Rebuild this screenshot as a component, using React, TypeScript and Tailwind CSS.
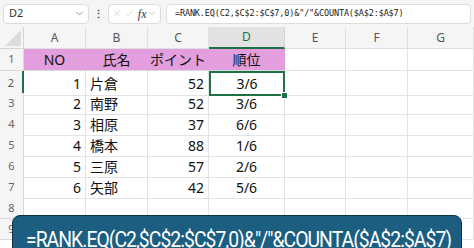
import { ChevronDown, X, Check } from 'lucide-react';

// ============================================
// Data
// ============================================

const columns = ['A', 'B', 'C', 'D', 'E', 'F', 'G'];

const rows = [
  { no: 1, name: '片倉', point: 52, rank: '3/6' },
  { no: 2, name: '南野', point: 52, rank: '3/6' },
  { no: 3, name: '相原', point: 37, rank: '6/6' },
  { no: 4, name: '橋本', point: 88, rank: '1/6' },
  { no: 5, name: '三原', point: 57, rank: '2/6' },
  { no: 6, name: '矢部', point: 42, rank: '5/6' },
];

const formula = '=RANK.EQ(C2,$C$2:$C$7,0)&"/"&COUNTA($A$2:$A$7)';

const gridCols = 'grid grid-cols-[24px_62px_62px_61px_76px_61px_62px_66px]';
const cellFont = "font-['Noto_Sans','Noto_Sans_CJK_JP',sans-serif]";

// ============================================
// Toolbar
// ============================================

function FormulaBar() {
  return (
    <div className="flex h-[27px] items-center bg-[#f5f5f5] px-[3px]">
      <div className="flex h-[20px] w-[86px] items-center justify-between rounded-[4px] border border-[#dcdcdc] bg-white pl-[5px] pr-[3px]">
        <span className="font-['Noto_Sans',sans-serif] text-[11px] text-[#333]">D2</span>
        <ChevronDown className="h-[11px] w-[11px] text-[#666]" strokeWidth={1.5} />
      </div>
      <span className="mx-[4px] text-[11px] font-bold leading-none text-[#555]">⋮</span>
      <div className="flex h-[20px] w-[53px] items-center gap-[2px] rounded-[4px] border border-[#dcdcdc] bg-white px-[3px]">
        <X className="h-[11px] w-[11px] text-[#bbb]" strokeWidth={1.3} />
        <Check className="h-[11px] w-[11px] text-[#bbb]" strokeWidth={1.3} />
        <span className="ml-[1px] font-['Liberation_Serif',serif] text-[12px] italic leading-none text-[#333]">fx</span>
        <ChevronDown className="h-[9px] w-[9px] text-[#999]" strokeWidth={1.5} />
      </div>
      <div className="ml-[5px] flex h-[20px] flex-1 items-center rounded-[4px] border border-[#dcdcdc] bg-white pl-[8px]">
        <span className="whitespace-nowrap font-['DejaVu_Sans_Mono',monospace] text-[8.5px] tracking-[-0.15px] text-[#222]">
          {formula}
        </span>
      </div>
    </div>
  );
}

// ============================================
// Sheet
// ============================================

function ColumnHeader() {
  return (
    <div className={`${gridCols} h-[22px] bg-[#f5f5f5]`}>
      <div className="relative border-r border-b border-[#d4d4d4]">
        <svg className="absolute right-[2px] bottom-[2px]" width="16" height="16" viewBox="0 0 16 16">
          <polygon points="16,0 16,16 0,16" fill="#dcdcdc" />
        </svg>
      </div>
      {columns.map((c) => (
        <div
          key={c}
          className={
            c === 'D'
              ? 'flex items-center justify-center border-r border-b-2 border-r-[#d4d4d4] border-b-[#1e7145] bg-[#e2e2e2] text-[12px] text-[#1e7145] font-["Noto_Sans",sans-serif]'
              : 'flex items-center justify-center border-r border-b border-[#e0e0e0] text-[12px] text-[#555] font-["Noto_Sans",sans-serif]'
          }
        >
          {c}
        </div>
      ))}
    </div>
  );
}

function RowHeader({ n, active }: { n: number; active?: boolean }) {
  return (
    <div
      className={
        active
          ? 'flex items-center justify-center border-r-2 border-b border-r-[#1e7145] border-b-[#e0e0e0] bg-[#f5f5f5] font-["Noto_Sans",sans-serif] text-[11px] text-[#555]'
          : 'flex items-center justify-center border-r border-b border-[#d8d8d8] bg-[#f5f5f5] font-["Noto_Sans",sans-serif] text-[11px] text-[#666]'
      }
    >
      {n}
    </div>
  );
}

function Cell({ children, align = 'center', className = '' }: { children?: React.ReactNode; align?: 'left' | 'right' | 'center'; className?: string }) {
  const justify = align === 'left' ? 'justify-start pl-[4px]' : align === 'right' ? 'justify-end pr-[4px]' : 'justify-center';
  return (
    <div className={`flex items-center border-r border-b border-[#e3e3e3] ${justify} ${cellFont} text-[14px] text-[#111] ${className}`}>
      {children}
    </div>
  );
}

function Sheet() {
  return (
    <div>
      <ColumnHeader />

      {/* Header row */}
      <div className={`${gridCols} h-[22px]`}>
        <RowHeader n={1} />
        {['NO', '氏名', 'ポイント', '順位'].map((h) => (
          <Cell key={h} className="bg-[#e39fdd] border-r-[#e39fdd] border-b-[#d9d9d9] text-[#2a1030]">
            {h}
          </Cell>
        ))}
        <Cell />
        <Cell />
        <Cell />
      </div>

      {rows.map((r, i) => (
        <div key={r.no} className={`${gridCols} ${i === 0 ? 'h-[22px]' : 'h-[21px]'}`}>
          <RowHeader n={i + 2} active={i === 0} />
          <Cell align="right">{r.no}</Cell>
          <Cell align="left">{r.name}</Cell>
          <Cell align="right">{r.point}</Cell>
          {i === 0 ? (
            <div className="relative flex items-center justify-center border-2 border-[#1e7145] font-['Noto_Sans',sans-serif] text-[14px] text-[#111]">
              {r.rank}
              <div className="absolute right-[-4px] bottom-[-4px] h-[5px] w-[5px] bg-[#1e7145] outline outline-1 outline-white" />
            </div>
          ) : (
            <Cell>{r.rank}</Cell>
          )}
          <Cell />
          <Cell />
          <Cell />
        </div>
      ))}

      {[8, 9].map((n) => (
        <div key={n} className={`${gridCols} h-[21px]`}>
          <RowHeader n={n} />
          <Cell />
          <Cell />
          <Cell />
          <Cell />
          <Cell />
          <Cell />
          <Cell />
        </div>
      ))}
    </div>
  );
}

// ============================================
// App
// ============================================

export default function App() {
  return (
    <div className="relative h-[248px] w-[474px] overflow-hidden bg-white">
      <FormulaBar />
      <Sheet />

      {/* Formula callout */}
      <div className="absolute left-[12px] top-[215px] h-[60px] w-[450px] overflow-hidden rounded-[8px] border border-[#0f3346] bg-[#1b5e80] pl-[13px] pt-[13px]">
        <span className="inline-block origin-left scale-x-[0.88] whitespace-nowrap font-['Roboto',sans-serif] text-[22px] leading-none tracking-[-1.1px] text-white">
          {formula}
        </span>
      </div>
    </div>
  );
}
